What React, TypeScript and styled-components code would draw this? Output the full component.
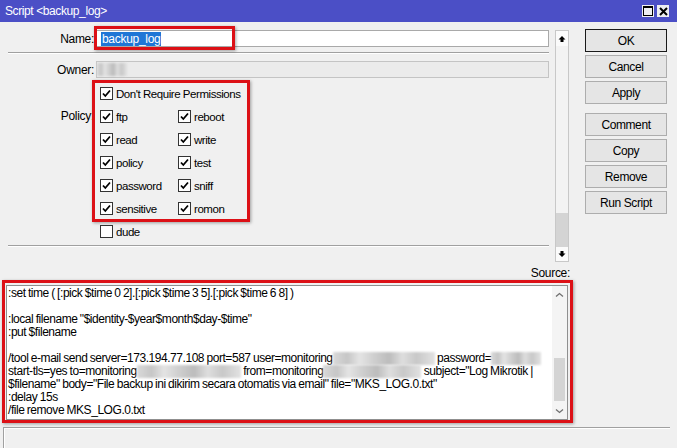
import React from "react";
import styled, { createGlobalStyle } from "styled-components";

const GlobalStyle = createGlobalStyle`
  html, body {
    margin: 0;
    padding: 0;
    background: #f0f0f0;
  }
  body {
    font-family: "Liberation Sans", Arial, sans-serif;
    font-size: 12px;
    color: #000;
  }
`;

const Window = styled.div`
  position: relative;
  width: 677px;
  height: 448px;
  display: flex;
  flex-direction: column;
  background: #f0f0f0;
  overflow: hidden;
`;

const TitleBar = styled.div`
  height: 22px;
  flex: none;
  display: flex;
  align-items: center;
  padding: 0 8px 0 5px;
  background: #4b4fc6;
  color: #fff;
  font-size: 12px;
`;

const Title = styled.span`
  flex: 1;
  letter-spacing: -0.4px;
`;

const TitleButton = styled.div`
  width: 12px;
  height: 12px;
  margin-left: 3px;
  display: flex;
  align-items: center;
  justify-content: center;
  background: #ededf2;
`;

const Content = styled.div`
  display: flex;
  flex: none;
`;

const MainColumn = styled.div`
  width: 572px;
  display: flex;
  flex-direction: column;
  padding-top: 8px;
`;

const TopArea = styled.div`
  display: flex;
  height: 232px;
`;

const Form = styled.div`
  width: 549px;
  display: flex;
  flex-direction: column;
`;

const FieldRow = styled.div`
  display: flex;
  align-items: center;
  height: 17px;
`;

const Label = styled.div`
  width: 94px;
  margin-right: 2px;
  text-align: right;
  letter-spacing: -0.3px;
`;

const Input = styled.div<{ $disabled?: boolean }>`
  flex: 1;
  height: 17px;
  box-sizing: border-box;
  border: 1px solid ${(p) => (p.$disabled ? "#c4c4c4" : "#a9a9a9")};
  background: ${(p) => (p.$disabled ? "#ebebeb" : "#fff")};
  display: flex;
  align-items: center;
  padding-left: ${(p) => (p.$disabled ? 0 : 4)}px;
`;

const Selected = styled.span`
  background: #1f76d6;
  color: #fff;
  line-height: 14px;
  padding: 0 1px;
  letter-spacing: -0.3px;
`;

const Blur = styled.span<{ $w: number }>`
  display: inline-block;
  width: ${(p) => p.$w}px;
  height: 13px;
  vertical-align: middle;
  background: linear-gradient(
    90deg,
    #d9d9d9 0%,
    #c6c6c6 14%,
    #e4e4e4 26%,
    #cfcfcf 40%,
    #bcbcbc 55%,
    #dedede 68%,
    #c8c8c8 82%,
    #e2e2e2 100%
  );
  filter: blur(1px);
`;

const Separator = styled.div<{ $top: number; $bottom: number }>`
  margin: ${(p) => p.$top}px 0 ${(p) => p.$bottom}px 8px;
  border-top: 1px solid #a0a0a0;
  border-bottom: 1px solid #fff;
`;

const PolicyRow = styled.div`
  display: flex;
  margin-top: 4px;
`;

const PolicyLabel = styled(Label)`
  margin-top: 23px;
  margin-right: 6px;
  height: 23px;
  line-height: 23px;
`;

const CheckGrid = styled.div`
  display: grid;
  grid-template-columns: 78px 100px;
  grid-auto-rows: 23px;
`;

const CheckItem = styled.label<{ $wide?: boolean }>`
  display: flex;
  align-items: center;
  grid-column: ${(p) => (p.$wide ? "1 / span 2" : "auto")};
  font-size: 11.5px;
  letter-spacing: -0.45px;
  white-space: nowrap;
`;

const Box = styled.span`
  width: 13px;
  height: 13px;
  box-sizing: border-box;
  border: 1px solid #333;
  background: #fff;
  margin-right: 3px;
  display: flex;
  align-items: center;
  justify-content: center;
`;

const FormScroll = styled.div`
  width: 14px;
  margin-left: 6px;
  display: flex;
  flex-direction: column;
  border: 1px solid #c8c8c8;
  box-sizing: border-box;
  background: #f3f3f3;
`;

const ScrollArrow = styled.div<{ $h: number; $bg?: string }>`
  height: ${(p) => p.$h}px;
  flex: none;
  display: flex;
  align-items: center;
  justify-content: center;
  background: ${(p) => p.$bg ?? "#fbfbfb"};
`;

const Track = styled.div`
  flex: 1;
  display: flex;
  flex-direction: column;
  justify-content: flex-end;
`;

const Thumb = styled.div<{ $h: number; $gap: number; $after?: number }>`
  height: ${(p) => p.$h}px;
  margin: 0 ${(p) => p.$gap}px ${(p) => p.$after ?? 0}px;
  background: #d4d4d4;
`;

const SourceLabel = styled.div`
  margin-top: 4px;
  height: 14px;
  line-height: 14px;
  padding-right: 2px;
  text-align: right;
  letter-spacing: -0.3px;
`;

const SourceBox = styled.div`
  margin: 5px 0 7px 6px;
  width: 562px;
  height: 135px;
  box-sizing: border-box;
  border: 1px solid #8f8f8f;
  background: #fff;
  display: flex;
`;

const SourceText = styled.div`
  flex: 1;
  padding: 1px 0 0 1px;
  font-size: 12px;
  line-height: 13px;
  letter-spacing: -0.45px;
  word-spacing: -0.5px;
  white-space: pre;
  overflow: hidden;
`;

const Line = styled.div`
  height: 13px;
`;

const SourceScroll = styled.div`
  width: 15px;
  display: flex;
  flex-direction: column;
  background: #f4f4f4;
`;

const ButtonColumn = styled.div`
  display: flex;
  flex-direction: column;
  padding: 7px 0 0 13px;
`;

const Button = styled.button<{ $default?: boolean; $gap?: number }>`
  width: 82px;
  height: 23px;
  margin-bottom: ${(p) => p.$gap ?? 3}px;
  box-sizing: border-box;
  border: 1px solid ${(p) => (p.$default ? "#1a1a1a" : "#adadad")};
  background: #e5e5e5;
  font-family: "Liberation Sans", Arial, sans-serif;
  font-size: 12px;
  letter-spacing: -0.4px;
  color: #000;
  padding: 0;
`;

const StatusBar = styled.div`
  flex: 1;
  margin: 0 7px 0 3px;
  border-top: 1px solid #a0a0a0;
  border-left: 1px solid #a0a0a0;
  box-shadow: inset 1px 1px 0 #fff;
`;

const Highlight = styled.div<{ $x: number; $y: number; $w: number; $h: number }>`
  position: absolute;
  left: ${(p) => p.$x}px;
  top: ${(p) => p.$y}px;
  width: ${(p) => p.$w}px;
  height: ${(p) => p.$h}px;
  box-sizing: border-box;
  border: 3px solid #dc1016;
  box-shadow: 1px 1px 3px rgba(0, 0, 0, 0.35);
  pointer-events: none;
`;

const Check = () => (
  <svg width="11" height="11" viewBox="0 0 11 11">
    <path d="M2 5.5 L4.3 8 L9 2.5" fill="none" stroke="#000" strokeWidth="1.8" />
  </svg>
);

const CheckBox = ({ label, checked = true, wide }: { label: string; checked?: boolean; wide?: boolean }) => (
  <CheckItem $wide={wide}>
    <Box>{checked && <Check />}</Box>
    {label}
  </CheckItem>
);

const BlackArrow = ({ down }: { down?: boolean }) => (
  <svg width="8" height="8" viewBox="0 0 8 8" style={down ? { transform: "rotate(180deg)" } : undefined}>
    <polygon points="4,1 7.5,4.5 5.5,4.5 5.5,7 2.5,7 2.5,4.5 0.5,4.5" fill="#000" />
  </svg>
);

const Chevron = ({ down }: { down?: boolean }) => (
  <svg width="9" height="6" viewBox="0 0 9 6">
    <path
      d={down ? "M1 1.5 L4.5 4.5 L8 1.5" : "M1 4.5 L4.5 1.5 L8 4.5"}
      fill="none"
      stroke="#707070"
      strokeWidth="1.3"
    />
  </svg>
);

const policies: [string, string][] = [
  ["ftp", "reboot"],
  ["read", "write"],
  ["policy", "test"],
  ["password", "sniff"],
  ["sensitive", "romon"],
];

export default function App() {
  return (
    <>
      <GlobalStyle />
      <Window>
        <TitleBar>
          <Title>{"Script <backup_log>"}</Title>
          <TitleButton>
            <svg width="10" height="10" viewBox="0 0 10 10">
              <rect x="0.5" y="0.5" width="9" height="9" fill="none" stroke="#000" />
              <rect x="0.5" y="0.5" width="9" height="1.5" fill="#000" />
            </svg>
          </TitleButton>
          <TitleButton>
            <svg width="9" height="9" viewBox="0 0 9 9">
              <path d="M1 1 L8 8 M8 1 L1 8" stroke="#000" strokeWidth="2" />
            </svg>
          </TitleButton>
        </TitleBar>

        <Content>
          <MainColumn>
            <TopArea>
              <Form>
                <FieldRow>
                  <Label>Name:</Label>
                  <Input>
                    <Selected>backup_log</Selected>
                  </Input>
                </FieldRow>
                <Separator $top={5} $bottom={7} />
                <FieldRow>
                  <Label>Owner:</Label>
                  <Input $disabled>
                    <Blur $w={30} />
                  </Input>
                </FieldRow>
                <PolicyRow>
                  <PolicyLabel>Policy:</PolicyLabel>
                  <CheckGrid>
                    <CheckBox label="Don't Require Permissions" wide />
                    {policies.map(([a, b]) => (
                      <React.Fragment key={a}>
                        <CheckBox label={a} />
                        <CheckBox label={b} />
                      </React.Fragment>
                    ))}
                    <CheckBox label="dude" checked={false} />
                  </CheckGrid>
                </PolicyRow>
                <Separator $top={2} $bottom={0} />
              </Form>
              <FormScroll>
                <ScrollArrow $h={15}>
                  <BlackArrow />
                </ScrollArrow>
                <Track>
                  <Thumb $h={34} $gap={0} />
                </Track>
                <ScrollArrow $h={14}>
                  <BlackArrow down />
                </ScrollArrow>
              </FormScroll>
            </TopArea>

            <SourceLabel>Source:</SourceLabel>
            <SourceBox>
              <SourceText>
                <Line>:set time ( [:pick $time 0 2].[:pick $time 3 5].[:pick $time 6 8] )</Line>
                <Line />
                <Line>:local filename "$identity-$year$month$day-$time"</Line>
                <Line>:put $filename</Line>
                <Line />
                <Line>
                  /tool e-mail send server=173.194.77.108 port=587 user=monitoring<Blur $w={102} /> password=
                  <Blur $w={50} />
                </Line>
                <Line>
                  start-tls=yes to=monitoring<Blur $w={104} /> from=monitoring<Blur $w={98} /> subject="Log Mikrotik |
                </Line>
                <Line>$filename" body="File backup ini dikirim secara otomatis via email" file="MKS_LOG.0.txt"</Line>
                <Line>:delay 15s</Line>
                <Line>/file remove MKS_LOG.0.txt</Line>
              </SourceText>
              <SourceScroll>
                <ScrollArrow $h={17} $bg="#f4f4f4">
                  <Chevron />
                </ScrollArrow>
                <Track>
                  <Thumb $h={43} $gap={2} $after={1} />
                </Track>
                <ScrollArrow $h={17} $bg="#f4f4f4">
                  <Chevron down />
                </ScrollArrow>
              </SourceScroll>
            </SourceBox>
          </MainColumn>

          <ButtonColumn>
            <Button $default>OK</Button>
            <Button>Cancel</Button>
            <Button $gap={9}>Apply</Button>
            <Button>Comment</Button>
            <Button>Copy</Button>
            <Button>Remove</Button>
            <Button>Run Script</Button>
          </ButtonColumn>
        </Content>

        <StatusBar />

        <Highlight $x={94} $y={26} $w={141} $h={24} />
        <Highlight $x={92} $y={80} $w={158} $h={142} />
        <Highlight $x={2} $y={280} $w={571} $h={143} />
      </Window>
    </>
  );
}
